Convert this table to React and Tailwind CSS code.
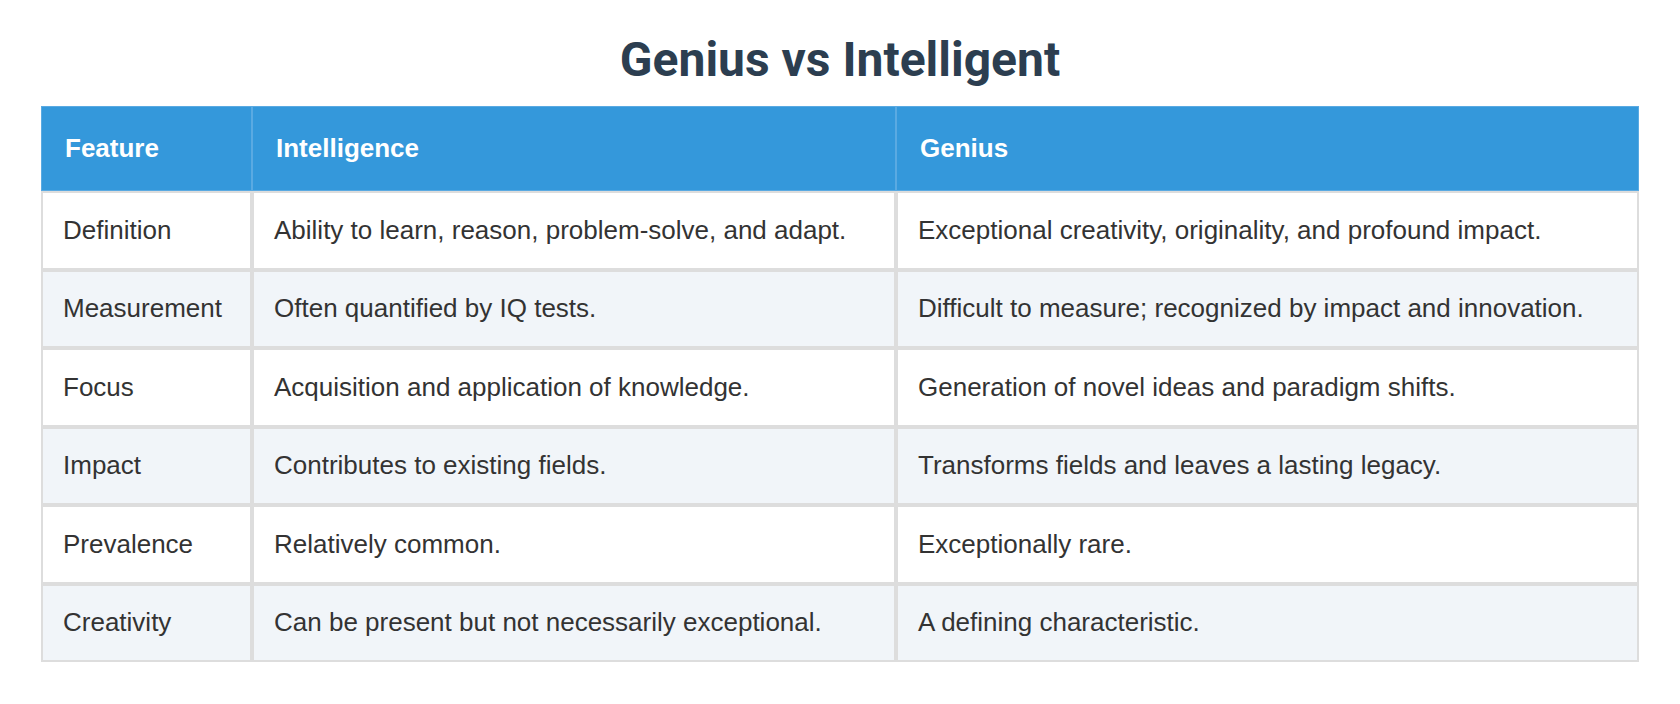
import React from 'react';

// comparison rows
const rows = [
  { feature: 'Definition', intelligence: 'Ability to learn, reason, problem-solve, and adapt.', genius: 'Exceptional creativity, originality, and profound impact.' },
  { feature: 'Measurement', intelligence: 'Often quantified by IQ tests.', genius: 'Difficult to measure; recognized by impact and innovation.' },
  { feature: 'Focus', intelligence: 'Acquisition and application of knowledge.', genius: 'Generation of novel ideas and paradigm shifts.' },
  { feature: 'Impact', intelligence: 'Contributes to existing fields.', genius: 'Transforms fields and leaves a lasting legacy.' },
  { feature: 'Prevalence', intelligence: 'Relatively common.', genius: 'Exceptionally rare.' },
  { feature: 'Creativity', intelligence: 'Can be present but not necessarily exceptional.', genius: 'A defining characteristic.' },
];

const App = () => {
  return (
    <div className="min-h-[704px] bg-white px-[41px] pt-8 font-['Liberation_Sans',Arial,sans-serif]">
      {/* Title */}
      <h1 className="mb-[18px] text-center font-['Roboto',sans-serif] text-[48px] font-bold leading-[56px] text-[#2c3e50]">
        Genius vs Intelligent
      </h1>

      {/* Table */}
      <table className="w-full table-fixed border-separate border-spacing-0 text-[26px] leading-[39px]">
        <colgroup>
          <col className="w-[211px]" />
          <col className="w-[644px]" />
          <col />
        </colgroup>
        <thead>
          <tr className="bg-[#3498db] text-white">
            <th className="border border-[#5aaae2] pl-[23px] pr-5 py-[22px] text-left font-bold">Feature</th>
            <th className="border border-[#5aaae2] pl-[23px] pr-5 py-[22px] text-left font-bold">Intelligence</th>
            <th className="border border-[#5aaae2] pl-[23px] pr-5 py-[22px] text-left font-bold">Genius</th>
          </tr>
        </thead>
        <tbody>
          {rows.map((row, i) => (
            <tr key={row.feature} className={i % 2 === 1 ? 'bg-[#f1f5f9]' : 'bg-white'}>
              <td className="border-2 border-[#dddddd] px-5 py-[17.75px] text-[#333333]">{row.feature}</td>
              <td className="border-2 border-[#dddddd] px-5 py-[17.75px] text-[#333333]">{row.intelligence}</td>
              <td className="border-2 border-[#dddddd] px-5 py-[17.75px] text-[#333333]">{row.genius}</td>
            </tr>
          ))}
        </tbody>
      </table>
    </div>
  );
};

export default App;
